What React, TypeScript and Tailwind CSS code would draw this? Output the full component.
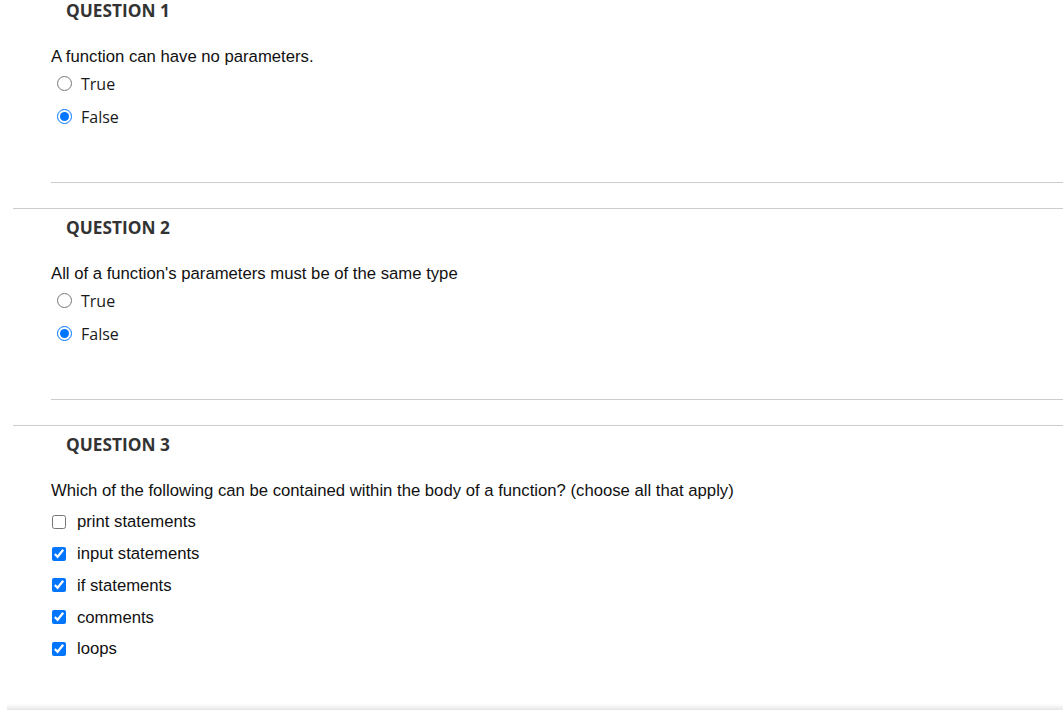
import { useState } from 'react';

type Choice = { label: string; checked: boolean };

const questions = [
  {
    title: 'QUESTION 1',
    text: 'A function can have no parameters.',
    kind: 'radio' as const,
    choices: [
      { label: 'True', checked: false },
      { label: 'False', checked: true },
    ],
  },
  {
    title: 'QUESTION 2',
    text: "All of a function's parameters must be of the same type",
    kind: 'radio' as const,
    choices: [
      { label: 'True', checked: false },
      { label: 'False', checked: true },
    ],
  },
  {
    title: 'QUESTION 3',
    text: 'Which of the following can be contained within the body of a function? (choose all that apply)',
    kind: 'checkbox' as const,
    choices: [
      { label: 'print statements', checked: false },
      { label: 'input statements', checked: true },
      { label: 'if statements', checked: true },
      { label: 'comments', checked: true },
      { label: 'loops', checked: true },
    ],
  },
];

function RadioGroup({ name, choices }: { name: string; choices: Choice[] }) {
  const [value, setValue] = useState(choices.findIndex((c) => c.checked));
  return (
    <div className="-mt-[1px] flex flex-col">
      {choices.map((c, i) => (
        <label key={c.label} className="flex h-[33px] items-center pl-[6px] font-['Open_Sans',sans-serif] text-[16px] text-[#1a1a1a]">
          <input
            type="radio"
            name={name}
            checked={value === i}
            onChange={() => setValue(i)}
            className="m-0 h-[15px] w-[15px] accent-[#0075ff]"
          />
          <span className="ml-[9px]">{c.label}</span>
        </label>
      ))}
    </div>
  );
}

function CheckGroup({ choices }: { choices: Choice[] }) {
  const [vals, setVals] = useState(choices.map((c) => c.checked));
  return (
    <div className="mt-[4px] flex flex-col">
      {choices.map((c, i) => (
        <label key={c.label} className="flex h-[31.75px] items-center pl-[1px] font-['Liberation_Sans',Arial,sans-serif] text-[16.7px] text-[#111]">
          <input
            type="checkbox"
            checked={vals[i]}
            onChange={() => setVals(vals.map((v, j) => (j === i ? !v : v)))}
            className="m-0 h-[14px] w-[14px] accent-[#0075ff]"
          />
          <span className="ml-[11px]">{c.label}</span>
        </label>
      ))}
    </div>
  );
}

export default function App() {
  return (
    <div className="min-h-[710px] overflow-hidden bg-white">
      <div className="pl-[13px]">
        {questions.map((q, idx) => (
          <div key={q.title} className={idx > 0 ? 'border-t border-[#cccccc]' : ''}>
            <div className="pl-[38px]">
              <h2 className={`${idx > 0 ? 'pt-[8px]' : 'pt-0'} pl-[15px] font-['Open_Sans',sans-serif] text-[17.3px] leading-[22px] font-bold text-[#333]`}>
                {q.title}
              </h2>
              <p className="mt-[24px] font-['Liberation_Sans',Arial,sans-serif] text-[16.7px] leading-[22px] text-[#111]">{q.text}</p>
              {q.kind === 'radio' ? <RadioGroup name={q.title} choices={q.choices} /> : <CheckGroup choices={q.choices} />}
              {idx < 2 && <div className="mt-[49px] border-t border-[#cccccc]" />}
              {idx < 2 && <div className="h-[25px]" />}
            </div>
          </div>
        ))}
      </div>
      <div className="mt-[39px] ml-[7px] h-[6px] bg-gradient-to-b from-white to-[#e6e6e6]" />
    </div>
  );
}
